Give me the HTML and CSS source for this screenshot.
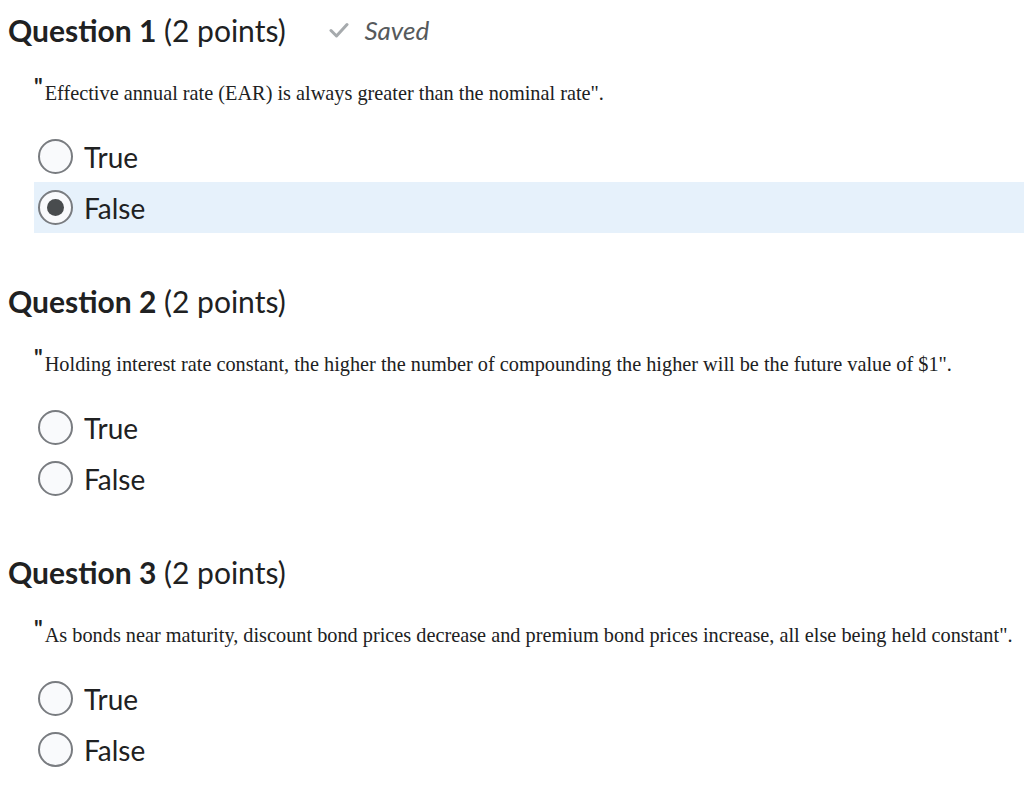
FILE: index.html
```html
<!DOCTYPE html>
<html lang="en">
<head>
<meta charset="utf-8">
<title>Quiz</title>
<link rel="stylesheet" href="styles.css">
</head>
<body>
<main class="quiz">
  <section class="question">
    <h2 class="q-title"><strong>Question 1</strong> (2 points) <span class="saved"><svg class="check" width="20" height="16" viewBox="0 0 20 16"><path d="M2 8.5 L7.5 14 L18 2.5" fill="none" stroke="#a6aaad" stroke-width="3" stroke-linecap="round" stroke-linejoin="round"/></svg><em>Saved</em></span></h2>
    <p class="q-text"><span class="quote">"</span>Effective annual rate (EAR) is always greater than the nominal rate".</p>
    <ul class="options">
      <li class="option"><span class="radio"></span><span class="label">True</span></li>
      <li class="option selected"><span class="radio checked"></span><span class="label">False</span></li>
    </ul>
  </section>
  <section class="question">
    <h2 class="q-title"><strong>Question 2</strong> (2 points)</h2>
    <p class="q-text"><span class="quote">"</span>Holding interest rate constant, the higher the number of compounding the higher will be the future value of $1".</p>
    <ul class="options">
      <li class="option"><span class="radio"></span><span class="label">True</span></li>
      <li class="option"><span class="radio"></span><span class="label">False</span></li>
    </ul>
  </section>
  <section class="question">
    <h2 class="q-title"><strong>Question 3</strong> (2 points)</h2>
    <p class="q-text"><span class="quote">"</span>As bonds near maturity, discount bond prices decrease and premium bond prices increase, all else being held constant".</p>
    <ul class="options">
      <li class="option"><span class="radio"></span><span class="label">True</span></li>
      <li class="option"><span class="radio"></span><span class="label">False</span></li>
    </ul>
  </section>
</main>
</body>
</html>
```
FILE: styles.css
```css
html, body {
  margin: 0;
  padding: 0;
  background: #ffffff;
}
body {
  font-family: Lato, "Noto Sans", sans-serif;
  color: #202122;
  overflow: hidden;
}
.quiz {
  padding: 12px 0 0 8px;
}
.question {
  margin-bottom: 50px;
}
.q-title {
  margin: 0;
  font-size: 30px;
  line-height: 36px;
  font-weight: 400;
  color: #202122;
  display: flex;
  align-items: center;
  white-space: pre;
}
.q-title strong {
  font-weight: 700;
}
.saved {
  display: inline-flex;
  align-items: center;
  margin-left: 36px;
  color: #565a5c;
  font-size: 26px;
}
.saved em {
  font-style: italic;
  margin-left: 15px;
}
.check {
  display: block;
}
.q-text {
  margin: 32px 0 0 26px;
  font-family: "Liberation Serif", "Times New Roman", serif;
  font-size: 20.3px;
  line-height: 24px;
  color: #202122;
  white-space: nowrap;
}
.quote {
  font-family: Lato, sans-serif;
  font-size: 22px;
  font-weight: 700;
  position: relative;
  top: -5px;
  margin-right: 2px;
}
.options {
  list-style: none;
  margin: 26px 0 0 26px;
  padding: 0;
}
.option {
  display: flex;
  align-items: center;
  height: 51px;
  padding-left: 4px;
}
.option.selected {
  background: #e6f1fb;
}
.radio {
  box-sizing: border-box;
  width: 35px;
  height: 35px;
  border: 2px solid #797c80;
  border-radius: 50%;
  background: #f9fafc;
  display: flex;
  align-items: center;
  justify-content: center;
  flex: none;
}
.radio.checked::after {
  content: "";
  width: 17px;
  height: 17px;
  border-radius: 50%;
  background: #494c4e;
}
.label {
  margin-left: 11px;
  font-size: 28px;
  color: #202122;
}
```
